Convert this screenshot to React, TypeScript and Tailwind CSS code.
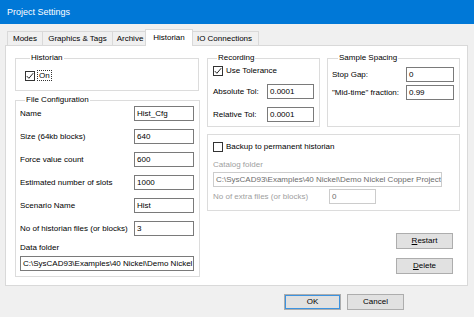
import React from "react";

const Check = ({ checked }: { checked?: boolean }) => (
  <span className="w-[10px] h-[10px] shrink-0 border border-[#333333] bg-white flex items-center justify-center">
    {checked && (
      <svg width="8" height="8" viewBox="0 0 8 8">
        <path d="M0.8 4.1 L2.9 6.3 L7.2 1.2" fill="none" stroke="#222222" strokeWidth="1" />
      </svg>
    )}
  </span>
);

const Box = ({ children, className }: { children: React.ReactNode; className: string }) => (
  <div
    className={`h-[15px] shrink-0 border border-[#7a7a7a] bg-white pl-[2px] leading-[13px] overflow-hidden whitespace-nowrap ${className}`}
  >
    {children}
  </div>
);

const Button = ({ label, rest, className }: { label: string; rest: string; className?: string }) => (
  <div
    className={`w-[57px] h-[16px] flex items-center justify-center bg-[#e1e1e1] border border-[#adadad] ${className ?? ""}`}
  >
    <span>
      <span className="underline">{label}</span>
      {rest}
    </span>
  </div>
);

const configRows = [
  { label: "Name", value: "Hist_Cfg" },
  { label: "Size (64kb blocks)", value: "640" },
  { label: "Force value count", value: "600" },
  { label: "Estimated number of slots", value: "1000" },
  { label: "Scenario Name", value: "Hist" },
  { label: "No of historian files (or blocks)", value: "3" },
];

const tabs = [
  { name: "Modes", cls: "w-[36px]" },
  { name: "Graphics & Tags", cls: "w-[71px] -ml-px" },
  { name: "Archive", cls: "w-[36px] -ml-px" },
  { name: "Historian", cls: "w-[48px] -ml-[3px]", active: true },
  { name: "IO Connections", cls: "w-[69px] -ml-[3px]" },
];

export default function App() {
  return (
    <div className="w-[474px] h-[317px] overflow-hidden bg-[#f0f0f0] flex flex-col font-['Liberation_Sans',Arial,sans-serif] text-[8px] leading-[10px] text-black">
      {/* title bar */}
      <div className="h-[24px] shrink-0 bg-[#0078d7] text-white text-[9px] flex items-center pl-[7px] pb-[1px]">
        Project Settings
      </div>

      {/* tabs */}
      <div className="h-[21px] shrink-0 flex items-end pl-[7px]">
        {tabs.map((t) =>
          t.active ? (
            <div
              key={t.name}
              className={`relative z-10 -mb-px h-[17px] bg-white border border-b-0 border-[#d9d9d9] flex items-center justify-center pb-[1px] ${t.cls}`}
            >
              {t.name}
            </div>
          ) : (
            <div
              key={t.name}
              className={`h-[14px] bg-[#f0f0f0] border border-b-0 border-[#d9d9d9] flex items-center justify-center ${t.cls}`}
            >
              {t.name}
            </div>
          )
        )}
      </div>

      {/* panel */}
      <div className="mx-[5px] w-[463px] h-[241px] shrink-0 border border-[#d9d9d9] bg-white flex pl-[9px] pt-[7px]">
        {/* left column */}
        <div className="w-[184px] flex flex-col">
          <fieldset className="h-[38px] border border-[#dcdcdc] pl-[9px]">
            <legend className="ml-[5px] px-[1px]">Historian</legend>
            <div className="flex items-center gap-[2px] mt-[7px]">
              <Check checked />
              <span className="border border-dotted border-[#333333] px-[1px] leading-[9px]">On</span>
            </div>
          </fieldset>

          <fieldset className="mt-[4px] h-[182px] border border-[#dcdcdc] pl-[4px] pr-[5px]">
            <legend className="ml-[5px] px-[1px]">File Configuration</legend>
            <div className="flex flex-col gap-[8px] pt-[1px]">
              {configRows.map((r) => (
                <div key={r.label} className="flex items-center justify-between">
                  <span>{r.label}</span>
                  <Box className="w-[60px]">{r.value}</Box>
                </div>
              ))}
            </div>
            <div className="mt-[7px]">Data folder</div>
            <Box className="mt-[3px] w-[174px]">C:\SysCAD93\Examples\40 Nickel\Demo Nickel Copper Project</Box>
          </fieldset>
        </div>

        {/* right column */}
        <div className="ml-[8px] w-[253px] flex flex-col">
          <div className="flex gap-[7px]">
            <fieldset className="w-[113px] h-[74px] border border-[#dcdcdc] pl-[5px] pr-[5px]">
              <legend className="ml-[4px] px-[1px]">Recording</legend>
              <div className="flex items-center gap-[3px] mt-[3px]">
                <Check checked />
                <span>Use Tolerance</span>
              </div>
              <div className="flex items-center justify-between mt-[8px]">
                <span>Absolute Tol:</span>
                <Box className="w-[47px]">0.0001</Box>
              </div>
              <div className="flex items-center justify-between mt-[8px]">
                <span>Relative Tol:</span>
                <Box className="w-[47px]">0.0001</Box>
              </div>
            </fieldset>

            <fieldset className="w-[133px] h-[74px] border border-[#dcdcdc] pl-[4px] pr-[5px]">
              <legend className="ml-[6px] px-[1px]">Sample Spacing</legend>
              <div className="flex items-center justify-between mt-[4px]">
                <span>Stop Gap:</span>
                <Box className="w-[48px]">0</Box>
              </div>
              <div className="flex items-center justify-between mt-[3px]">
                <span>"Mid-time" fraction:</span>
                <Box className="w-[48px]">0.99</Box>
              </div>
            </fieldset>
          </div>

          <div className="mt-[7px] h-[77px] border border-[#dcdcdc] pl-[5px] pt-[7px] flex flex-col">
            <div className="flex items-center gap-[3px]">
              <Check />
              <span>Backup to permanent historian</span>
            </div>
            <div className="mt-[8px] text-[#a0a0a0]">Catalog folder</div>
            <div className="mt-[2px] h-[15px] w-[229px] border border-[#cccccc] pl-[2px] leading-[13px] text-[#6d6d6d] overflow-hidden whitespace-nowrap">
              C:\SysCAD93\Examples\40 Nickel\Demo Nickel Copper Project
            </div>
            <div className="mt-[2px] flex items-center">
              <span className="w-[116px] text-[#a0a0a0]">No of extra files (or blocks)</span>
              <div className="h-[15px] w-[47px] border border-[#cccccc] pl-[2px] leading-[13px] text-[#6d6d6d]">0</div>
            </div>
          </div>

          <div className="mt-[22px] flex flex-col items-end gap-[9px] pr-[7px]">
            <Button label="R" rest="estart" />
            <Button label="D" rest="elete" />
          </div>
        </div>
      </div>

      {/* footer */}
      <div className="flex justify-end gap-[6px] pr-[70px] pt-[8px]">
        <Button label="" rest="OK" className="w-[56px] border-[#0078d7] shadow-[inset_0_0_0_1px_#3c93e0]" />
        <Button label="" rest="Cancel" className="w-[56px]" />
      </div>
    </div>
  );
}
